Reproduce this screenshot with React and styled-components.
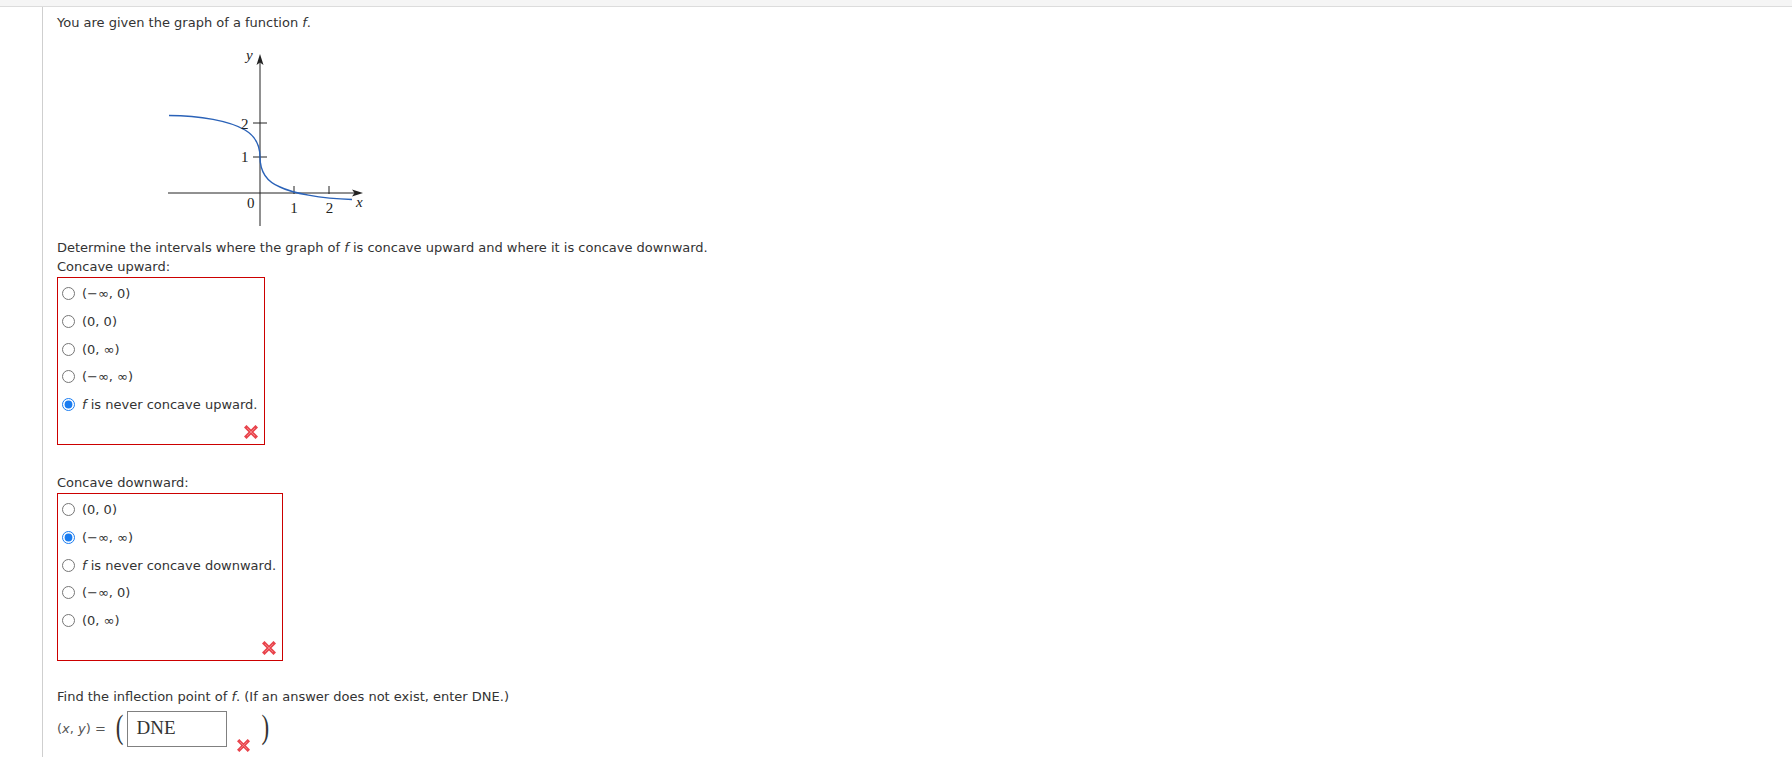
import React from 'react'
import styled, { createGlobalStyle } from 'styled-components'

const GlobalStyle = createGlobalStyle`
    body {
        margin: 0;
        background: #fff;
        font-family: "DejaVu Sans", Verdana, sans-serif;
        font-size: 13px;
        color: #333;
    }
`

const TopBar = styled.div`
    height: 6px;
    background: #f5f5f5;
    border-bottom: 1px solid #dcdcdc;
`

const Main = styled.div`
    margin-left: 42px;
    border-left: 1px solid #cfcfcf;
    padding: 6px 0 0 14px;
    min-height: 750px;
    box-sizing: border-box;
`

const Line = styled.p`
    margin: ${p => p.$top || 0}px 0 0 0;
    line-height: 19px;
`

const Graph = styled.svg`
    display: block;
    margin: 8px 0 0 83px;
`

const Box = styled.div`
    display: inline-flex;
    flex-direction: column;
    margin-top: 1px;
    padding: 2px 6px 5px 4px;
    border: 1px solid #cc0000;
`

const Option = styled.label`
    display: flex;
    align-items: center;
    height: 27.7px;
    white-space: nowrap;
`

const Radio = styled.input`
    width: 13px;
    height: 13px;
    margin: 0 7px 0 0;
    accent-color: #1a7cf0;
`

const Mark = styled.svg`
    display: block;
    align-self: ${p => (p.$end ? 'flex-end' : 'auto')};
    margin: ${p => p.$margin || '0'};
`

const AnswerRow = styled.div`
    display: flex;
    align-items: center;
    height: 36px;
    margin-top: 5px;
`

const Label = styled.span`
    color: #555;
    margin-right: 10px;
`

const Paren = styled.span`
    display: inline-block;
    font-family: "Liberation Serif", "Times New Roman", serif;
    font-size: 23px;
    line-height: 23px;
    color: #333;
    transform: scaleY(1.45);
    margin: ${p => p.$margin};
`

const Input = styled.div`
    box-sizing: border-box;
    width: 100px;
    height: 36px;
    border: 1px solid #808080;
    padding: 4px 0 0 9px;
    font-family: "Liberation Serif", "Times New Roman", serif;
    font-size: 19px;
    line-height: 24px;
    color: #333;
`

const XMark = ({ size = 14, margin, end }) => (
    <Mark width={size} height={size} viewBox="0 0 14 14" $margin={margin} $end={end}>
        <path d="M2.5 2.5 L11.5 11.5 M11.5 2.5 L2.5 11.5" stroke="#e8444c" strokeWidth="3.6" strokeLinecap="square" />
        <path d="M3 3 L11 11 M11 3 L3 11" stroke="#f47c80" strokeWidth="1" />
    </Mark>
)

const FunctionGraph = () => (
    <Graph width="240" height="198" viewBox="0 0 240 198">
        <g stroke="#222" strokeWidth="1" fill="none">
            <line x1="120" y1="20" x2="120" y2="186" />
            <line x1="28" y1="153" x2="216" y2="153" />
            <line x1="113" y1="83" x2="127" y2="83" />
            <line x1="113" y1="117" x2="127" y2="117" />
            <line x1="154" y1="146" x2="154" y2="154" />
            <line x1="189" y1="146" x2="189" y2="154" />
        </g>
        <path d="M120 14 L116.5 25 L120 22.5 L123.5 25 Z" fill="#222" />
        <path d="M223 153 L212 149.5 L214.5 153 L212 156.5 Z" fill="#222" />
        <path
            d="M29 75.5 C60 75.5 90 81 105 90 C115 96 120 106 120 117 C120 130 125 141 140 147 C152 153 180 158.5 212 159.5"
            stroke="#2a62b8"
            strokeWidth="1.4"
            fill="none"
        />
        <g fontFamily="'Liberation Serif', 'Times New Roman', serif" fontSize="15" fill="#222">
            <text x="106" y="20" fontStyle="italic">y</text>
            <text x="101" y="89">2</text>
            <text x="101" y="122">1</text>
            <text x="107" y="168">0</text>
            <text x="154" y="173" textAnchor="middle">1</text>
            <text x="189.5" y="173" textAnchor="middle">2</text>
            <text x="216" y="167" fontStyle="italic">x</text>
        </g>
    </Graph>
)

const upward = [
    { text: '(−∞, 0)' },
    { text: '(0, 0)' },
    { text: '(0, ∞)' },
    { text: '(−∞, ∞)' },
    { text: ' is never concave upward.', f: true, checked: true },
]

const downward = [
    { text: '(0, 0)' },
    { text: '(−∞, ∞)', checked: true },
    { text: ' is never concave downward.', f: true },
    { text: '(−∞, 0)' },
    { text: '(0, ∞)' },
]

const Choices = ({ name, items }) => (
    <Box>
        {items.map((item, i) => (
            <Option key={i}>
                <Radio type="radio" name={name} defaultChecked={!!item.checked} />
                <span>
                    {item.f && <i>f</i>}
                    {item.text}
                </span>
            </Option>
        ))}
        <XMark margin="6.5px 0 0 0" end />
    </Box>
)

const App = () => {
    return (
        <>
            <GlobalStyle />
            <TopBar />
            <Main>
                <Line>You are given the graph of a function <i>f</i>.</Line>
                <FunctionGraph />
                <Line>Determine the intervals where the graph of <i>f</i> is concave upward and where it is concave downward.</Line>
                <Line>Concave upward:</Line>
                <Choices name="up" items={upward} />
                <Line $top={28}>Concave downward:</Line>
                <Choices name="down" items={downward} />
                <Line $top={26}>Find the inflection point of <i>f</i>. (If an answer does not exist, enter DNE.)</Line>
                <AnswerRow>
                    <Label>(<i>x</i>, <i>y</i>) =</Label>
                    <Paren $margin="-2px 3px 0 0">(</Paren>
                    <Input>DNE</Input>
                    <XMark size={13} margin="0 0 -5px 10px" end />
                    <Paren $margin="-2px 0 0 12px">)</Paren>
                </AnswerRow>
            </Main>
        </>
    )
}

export default App
